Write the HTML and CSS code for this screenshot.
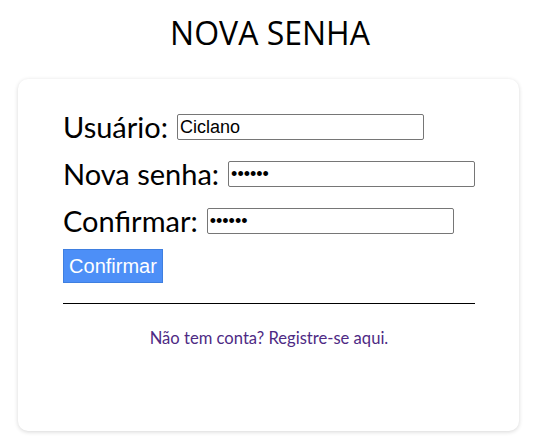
FILE: index.html
```html
<!DOCTYPE html>
<html lang="pt">
<head>
<meta charset="utf-8">
<title>Nova senha</title>
<link rel="stylesheet" href="styles.css">
</head>
<body>
<h1 class="title">NOVA SENHA</h1>
<div class="card">
  <form class="form">
    <div class="row"><label class="label" for="u">Usuário:</label><input class="field" id="u" type="text" value="Ciclano"></div>
    <div class="row"><label class="label" for="p">Nova senha:</label><input class="field" id="p" type="password" value="123456"></div>
    <div class="row"><label class="label" for="c">Confirmar:</label><input class="field" id="c" type="password" value="123456"></div>
    <div class="row"><button class="btn" type="button">Confirmar</button></div>
  </form>
  <hr class="divider">
  <p class="footer"><a class="link" href="#">Não tem conta? Registre-se aqui.</a></p>
</div>
</body>
</html>
```
FILE: styles.css
```css
html, body {
  margin: 0;
  padding: 0;
  background: #fff;
}
body {
  width: 540px;
  height: 445px;
  overflow: hidden;
  font-family: "Open Sans", "Noto Sans", sans-serif;
  color: #000;
}
.title {
  margin: 17px 0 0 0;
  font-weight: 400;
  font-size: 32px;
  line-height: 32px;
  text-align: center;
}
.card {
  margin: 30px 21px 0 18px;
  height: 352px;
  box-sizing: border-box;
  padding: 35px 44px 0 45px;
  border-radius: 10px;
  background: #fff;
  box-shadow: 0 1px 4px rgba(0,0,0,0.16);
}
.form {
  display: flex;
  flex-direction: column;
  gap: 21px;
}
.row {
  display: flex;
  align-items: center;
  height: 26px;
}
.row:last-child {
  height: 34px;
  margin-top: -6px;
}
.label {
  flex: none;
  white-space: nowrap;
  font-family: "Lato", sans-serif;
  font-size: 29px;
  line-height: 26px;
  margin-right: 9px;
}
.field {
  flex: none;
  box-sizing: border-box;
  width: 247px;
  height: 26px;
  margin: 0;
  padding: 1px 2px;
  border: 1px solid #767676;
  border-radius: 2px;
  font-family: "Liberation Sans", Arial, sans-serif;
  font-size: 18px;
  color: #000;
  background: #fff;
}
.btn {
  box-sizing: border-box;
  width: 100px;
  height: 34px;
  padding: 0;
  margin: 0;
  border: 1px solid #3f7fe0;
  border-radius: 0;
  background: #4d8ff7;
  color: #fff;
  font-family: "Liberation Sans", Arial, sans-serif;
  font-size: 20px;
}
.divider {
  margin: 20px 0 0 0;
  border: 0;
  border-top: 1px solid #000;
  height: 0;
}
.footer {
  margin: 24px 0 0 0;
  text-align: center;
  font-family: "Lato", sans-serif;
  font-size: 16.6px;
  line-height: 20px;
}
.link {
  color: #4e2a84;
  text-decoration: none;
}
```
